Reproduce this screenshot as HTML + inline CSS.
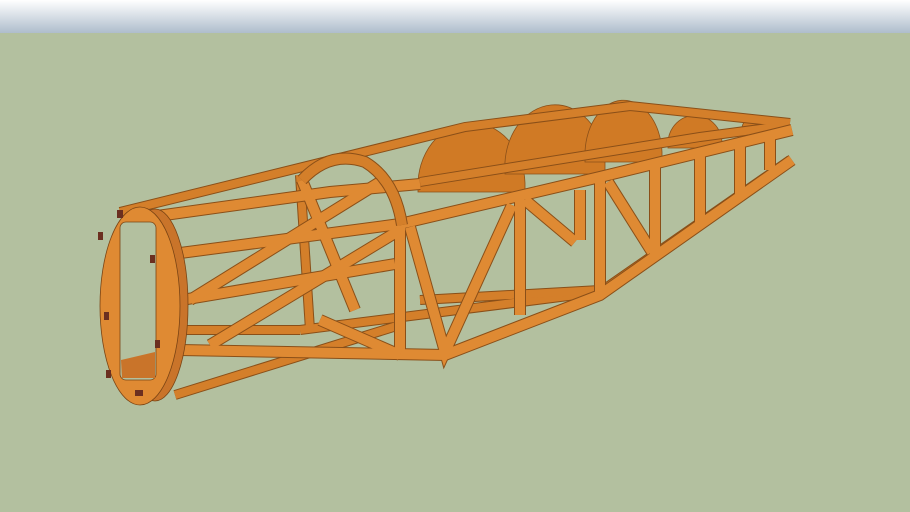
<!DOCTYPE html>
<html><head><style>
html,body{margin:0;padding:0;width:910px;height:512px;overflow:hidden}
body{background:#b3c09f}
</style></head><body>
<svg width="910" height="512" viewBox="0 0 910 512" xmlns="http://www.w3.org/2000/svg">
<defs>
<linearGradient id="sky" x1="0" y1="0" x2="0" y2="1">
<stop offset="0" stop-color="#ffffff"/><stop offset="1" stop-color="#aebdcc"/>
</linearGradient>
</defs>
<rect x="0" y="0" width="910" height="33" fill="url(#sky)"/>
<rect x="0" y="33" width="910" height="479" fill="#b3c09f"/>

<g fill="#d07a25" stroke="#8a4f18" stroke-width="0.8">
<path d="M418,188 A53,62 0 0 1 525,183 L525,192 L418,192Z"/>
<path d="M505,172 A50,62 0 0 1 605,162 L605,174 L505,174Z"/>
<path d="M585,158 A38,54 0 0 1 662,152 L662,162 L585,162Z"/>
<path d="M668,145 A27,28 0 0 1 722,142 L722,148 L668,148Z"/>
<path d="M742,130 A12,12 0 0 1 766,128 L766,134 L742,134Z"/>
</g>

<g stroke-linecap="butt" fill="none">
<g stroke="#8a4f18" stroke-width="10">
<path d="M120,212 L465,127 L630,106 L790,123"/>
<path d="M300,330 L600,292 L790,160"/>
<path d="M150,330 L300,330"/>
<path d="M420,182 L700,137 L790,125"/>
<path d="M175,395 L400,325"/>
<path d="M300,175 L310,330"/>
<path d="M420,300 L600,290"/>
</g>
<g stroke="#d47f2a" stroke-width="8">
<path d="M120,212 L465,127 L630,106 L790,123"/>
<path d="M300,330 L600,292 L790,160"/>
<path d="M150,330 L300,330"/>
<path d="M420,182 L700,137 L790,125"/>
<path d="M175,395 L400,325"/>
<path d="M300,175 L310,330"/>
<path d="M420,300 L600,290"/>
</g>

<g stroke="#8a4f18" stroke-width="12">
<path d="M150,257 L400,224 L600,177 L792,130"/>
<path d="M180,350 L445,355 L600,295 L792,160"/>
<path d="M150,217 L330,192 L420,184"/>
<path d="M170,302 L395,264"/>
<path d="M190,300 L380,182"/>
<path d="M210,345 L400,230"/>
<path d="M400,224 L400,355"/>
<path d="M520,200 L520,315"/>
<path d="M600,177 L600,295"/>
<path d="M410,227 L445,352 L512,205"/>
<path d="M525,200 L575,242"/>
<path d="M608,182 L652,252"/>
<path d="M655,162 L655,255"/>
<path d="M700,150 L700,225"/>
<path d="M740,140 L740,195"/>
<path d="M770,132 L770,170"/>
<path d="M302,180 L355,310"/>
<path d="M320,320 L400,355"/>
<path d="M580,190 L580,240"/>
</g>
<g stroke="#df8a33" stroke-width="10">
<path d="M150,257 L400,224 L600,177 L792,130"/>
<path d="M180,350 L445,355 L600,295 L792,160"/>
<path d="M150,217 L330,192 L420,184"/>
<path d="M170,302 L395,264"/>
<path d="M190,300 L380,182"/>
<path d="M210,345 L400,230"/>
<path d="M400,224 L400,355"/>
<path d="M520,200 L520,315"/>
<path d="M600,177 L600,295"/>
<path d="M410,227 L445,352 L512,205"/>
<path d="M525,200 L575,242"/>
<path d="M608,182 L652,252"/>
<path d="M655,162 L655,255"/>
<path d="M700,150 L700,225"/>
<path d="M740,140 L740,195"/>
<path d="M770,132 L770,170"/>
<path d="M302,180 L355,310"/>
<path d="M320,320 L400,355"/>
<path d="M580,190 L580,240"/>
</g>
<path d="M302,180 Q330,150 365,162 Q395,180 402,225" stroke="#8a4f18" stroke-width="12"/>
<path d="M302,180 Q330,150 365,162 Q395,180 402,225" stroke="#d47f2a" stroke-width="10"/>
</g>

<ellipse cx="155" cy="305" rx="33" ry="96" fill="#c9742a" stroke="#7a4414" stroke-width="0.8"/>
<ellipse cx="140" cy="306" rx="40" ry="99" fill="#df8a33" stroke="#7a4414" stroke-width="0.8"/>
<rect x="120" y="222" width="36" height="158" rx="6" fill="#b3c09f" stroke="#7a4414" stroke-width="0.8"/>
<path d="M121,360 L155,352 L155,378 L122,378Z" fill="#c9742a"/>
<g fill="#6b2f20">
<rect x="117" y="210" width="6" height="8"/>
<rect x="98" y="232" width="5" height="8"/>
<rect x="104" y="312" width="5" height="8"/>
<rect x="106" y="370" width="5" height="8"/>
<rect x="135" y="390" width="8" height="6"/>
<rect x="150" y="255" width="5" height="8"/>
<rect x="155" y="340" width="5" height="8"/>
</g>
</svg>
</body></html>
